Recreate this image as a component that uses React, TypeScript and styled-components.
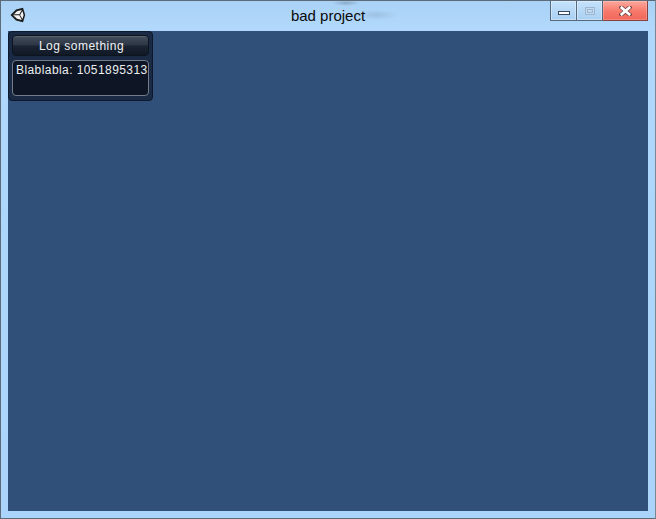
import styled, { createGlobalStyle } from 'styled-components';

const GlobalStyle = createGlobalStyle`
  html, body {
    margin: 0;
    padding: 0;
    width: 656px;
    height: 519px;
    overflow: hidden;
    background: #aed6fa;
  }
`;

const Window = styled.div`
  box-sizing: border-box;
  width: 656px;
  height: 519px;
  display: flex;
  flex-direction: column;
  border: 1px solid #5d6b78;
  border-right-color: #7b8894;
  background: linear-gradient(180deg, #b0d8fc 0%, #aad4fa 100%);
  font-family: "Liberation Sans", Arial, sans-serif;
`;

const TitleBar = styled.div`
  height: 29px;
  flex: none;
  display: flex;
  align-items: flex-start;
  position: relative;
  background:
    radial-gradient(ellipse 14px 3px at 345px 2px, rgba(110, 130, 150, 0.5), transparent),
    radial-gradient(ellipse 22px 5px at 375px 14px, rgba(130, 160, 190, 0.4), transparent),
    linear-gradient(180deg, #a9d2f6 0%, #b2d9fc 100%);
`;

const AppIcon = styled.svg`
  width: 16px;
  height: 16px;
  margin: 6px 0 0 9px;
  flex: none;
`;

const Title = styled.div`
  position: absolute;
  left: 0;
  right: 0;
  top: 7px;
  text-align: center;
  font-size: 15px;
  line-height: 16px;
  color: #0a0a0a;
`;

const Controls = styled.div`
  margin-left: auto;
  margin-right: 7px;
  display: flex;
  height: 20px;
  position: relative;
`;

const ControlButton = styled.div<{ $width: number }>`
  width: ${(p) => p.$width}px;
  height: 100%;
  display: flex;
  align-items: center;
  justify-content: center;
  box-sizing: border-box;
  border: 1px solid #56697d;
  border-top: none;
  border-left-width: ${(p) => (p.$width === 27 ? 1 : 0)}px;
  background: linear-gradient(180deg, #c5e2fb 0%, #a9d0f2 100%);
  box-shadow: inset 0 0 0 1px rgba(255, 255, 255, 0.35);
`;

const CloseButton = styled.div`
  width: 45px;
  height: 20px;
  display: flex;
  align-items: center;
  justify-content: center;
  box-sizing: border-box;
  border: 1px solid #8a4040;
  border-top: none;
  border-left: none;
  background: linear-gradient(180deg, #fba99e 0%, #f6786a 55%, #f0675a 100%);
  box-shadow: inset 0 0 0 1px rgba(255, 255, 255, 0.2);
`;

const MinGlyph = styled.div`
  width: 10px;
  height: 2px;
  margin-top: 4px;
  background: #fff;
  border: 1px solid #3a4a5c;
`;

const MaxGlyph = styled.div`
  width: 8px;
  height: 6px;
  border: 1px solid #9db8d0;
  box-shadow: inset 0 0 0 1px #c3dbf0, inset 0 0 0 2px #9db8d0;
  background: #c3dbf0;
`;

const Client = styled.main`
  flex: 1;
  margin: 1px 7px 7px 7px;
  background: #304f79;
  display: flex;
  align-items: flex-start;
`;

const Panel = styled.section`
  box-sizing: border-box;
  width: 145px;
  height: 70px;
  padding: 3px;
  display: flex;
  flex-direction: column;
  gap: 4px;
  background: #1a2a45;
  border: 1px solid #0e192c;
  border-radius: 4px;
`;

const LogButton = styled.button`
  box-sizing: border-box;
  width: 137px;
  height: 21px;
  padding: 1px 0 0 2px;
  border: 1px solid #0c1420;
  border-radius: 4px;
  background: linear-gradient(180deg, #454e5c 0%, #2e3747 45%, #1a2331 55%, #111927 100%);
  box-shadow: inset 0 1px 0 rgba(255, 255, 255, 0.12);
  color: #f0f1f2;
  font-family: inherit;
  font-size: 12px;
  letter-spacing: 0.5px;
  line-height: 18px;
  text-align: center;
`;

const LogBox = styled.div`
  box-sizing: border-box;
  width: 137px;
  height: 36px;
  padding: 2px 0 0 3px;
  border: 1px solid #737c88;
  border-radius: 4px;
  background: #0e1625;
  color: #eceef0;
  font-size: 12px;
  letter-spacing: 0.42px;
  line-height: 15px;
  white-space: nowrap;
`;

export default function App() {
  return (
    <>
      <GlobalStyle />
      <Window>
        <TitleBar>
          <AppIcon viewBox="0 0 16 16">
            <path d="M0.5 8 L6 2.6 L13 0.8 L15.2 8 L13 15.2 L6 13.4 Z" fill="#1c1c1c" />
            <path d="M3.2 8 L7 4.2 L11.8 3 L9.4 7.2 H4.6 Z" fill="#f4f4f4" />
            <path d="M3.2 8.2 H9.4 L11.8 13 L7 11.8 Z" fill="#f4f4f4" />
            <path d="M10.4 7.6 L12.4 4 L13.6 8 L12.4 12 L10.4 8.4 Z" fill="#f4f4f4" />
          </AppIcon>
          <Title>bad project</Title>
          <Controls>
            <ControlButton $width={27}>
              <MinGlyph />
            </ControlButton>
            <ControlButton $width={26}>
              <MaxGlyph />
            </ControlButton>
            <CloseButton>
              <svg width="13" height="10" viewBox="0 0 13 10">
                <path d="M2.5 1.5 L10.5 8.5 M10.5 1.5 L2.5 8.5" stroke="#6a3a3a" strokeWidth="4.2" strokeLinecap="square" />
                <path d="M2.8 1.8 L10.2 8.2 M10.2 1.8 L2.8 8.2" stroke="#ffffff" strokeWidth="2.8" strokeLinecap="square" />
              </svg>
            </CloseButton>
          </Controls>
        </TitleBar>
        <Client>
          <Panel>
            <LogButton>Log something</LogButton>
            <LogBox>Blablabla: 1051895313</LogBox>
          </Panel>
        </Client>
      </Window>
    </>
  );
}
